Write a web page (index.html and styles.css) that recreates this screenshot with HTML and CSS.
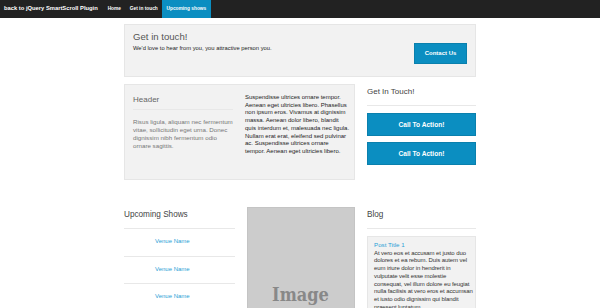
FILE: index.html
```html
<!DOCTYPE html>
<html lang="en">
<head>
    <meta charset="UTF-8">
    <title>jQuery SmartScroll Demo</title>
    <link rel="stylesheet" href="styles.css">
</head>
<body>

<div class="navbar">
    <a class="brand" href="#">back to jQuery SmartScroll Plugin</a>
    <ul class="nav">
        <li><a href="#">Home</a></li>
        <li><a href="#">Get in touch</a></li>
        <li class="active"><a href="#">Upcoming shows</a></li>
    </ul>
</div>

<div class="container">
    <div class="hero">
        <div>
            <h1>Get in touch!</h1>
            <p>We'd love to hear from you, you attractive person you.</p>
        </div>
        <a class="btn btn-hero" href="#">Contact Us</a>
    </div>

    <div class="row">
        <div class="well span8">
            <div class="well-col">
                <h2 class="title">Header</h2>
                <p class="muted">Risus ligula, aliquam nec fermentum vitae, sollicitudin eget urna. Donec dignissim nibh fermentum odio ornare sagittis.</p>
            </div>
            <div class="well-col well-text">
                <p>Suspendisse ultrices ornare tempor. Aenean eget ultricies libero. Phasellus non ipsum eros. Vivamus at dignissim massa. Aenean dolor libero, blandit quis interdum et, malesuada nec ligula. Nullam erat erat, eleifend sed pulvinar ac. Suspendisse ultrices ornare tempor. Aenean eget ultricies libero.</p>
            </div>
        </div>
        <div class="span4">
            <h2 class="title side-title">Get In Touch!</h2>
            <a class="btn btn-block" href="#">Call To Action!</a>
            <a class="btn btn-block" href="#">Call To Action!</a>
        </div>
    </div>

    <div class="row row-bottom">
        <div class="span4">
            <h2 class="title">Upcoming Shows</h2>
            <ul class="shows">
                <li><a href="#">Venue Name</a></li>
                <li><a href="#">Venue Name</a></li>
                <li><a href="#">Venue Name</a></li>
            </ul>
        </div>
        <div class="span4">
            <div class="placeholder">Image</div>
        </div>
        <div class="span4">
            <h2 class="title">Blog</h2>
            <div class="post">
                <a href="#">Post Title 1</a>
                <p>At vero eos et accusam et justo duo dolores et ea rebum. Duis autem vel eum iriure dolor in hendrerit in vulputate velit esse molestie consequat, vel illum dolore eu feugiat nulla facilisis at vero eros et accumsan et iusto odio dignissim qui blandit praesent luptatum</p>
            </div>
        </div>
    </div>
</div>

</body>
</html>
```

FILE: styles.css
```css
body {
    margin: 0;
    font-family: "Liberation Sans", Arial, sans-serif;
    font-size: 6px;
    line-height: 7.7px;
    color: #333;
    background-color: #fff;
    height: 308px;
    overflow: hidden;
}
a {
    text-decoration: none;
}
p {
    margin: 0;
}
.navbar {
    display: flex;
    align-items: center;
    height: 18px;
    background-color: #222;
    padding-left: 4px;
}
.brand {
    color: #fff;
    font-size: 5.8px;
    font-weight: bold;
    margin-right: 5.5px;
}
.nav {
    display: flex;
    list-style: none;
    margin: 0;
    padding: 0;
    height: 18px;
}
.nav li a {
    display: block;
    padding: 0 4.4px;
    line-height: 18px;
    color: #fff;
    font-size: 4.8px;
    font-weight: bold;
}
.nav li.active a {
    background-color: #0b8ec1;
}
.container {
    width: 352px;
    margin: 0 auto;
    padding-top: 6px;
}
.hero {
    display: flex;
    justify-content: space-between;
    align-items: flex-start;
    height: 53px;
    box-sizing: border-box;
    padding: 6px 8px 0 8px;
    background-color: #f2f2f2;
    border: 1px solid #e6e6e6;
}
.hero h1 {
    margin: 0 0 3px 0;
    font-size: 9.6px;
    line-height: 11px;
    font-weight: normal;
    color: #555;
}
.hero p {
    color: #222;
    font-size: 5.8px;
}
.btn {
    display: block;
    background-color: #0b8ec1;
    color: #fff;
    text-align: center;
    border: 1px solid #0a80ad;
    box-sizing: border-box;
}
.btn-hero {
    width: 53px;
    height: 21px;
    line-height: 19px;
    margin-top: 12px;
    font-size: 6px;
    font-weight: bold;
}
.row {
    display: flex;
    justify-content: space-between;
    margin-top: 7px;
}
.span8 {
    width: 231px;
}
.span4 {
    width: 111px;
}
.well {
    display: flex;
    justify-content: space-between;
    height: 96px;
    box-sizing: border-box;
    padding: 8px 4px 0 8px;
    background-color: #f2f2f2;
    border: 1px solid #e6e6e6;
}
.well-col {
    width: 100px;
}
.well-text {
    width: 105px;
    padding-top: 1px;
    color: #222;
}
.title {
    margin: 0;
    padding-bottom: 5px;
    font-size: 8px;
    line-height: 10px;
    font-weight: normal;
    color: #444;
    border-bottom: 1px solid #e8e8e8;
}
.well .title {
    padding-top: 2px;
    padding-bottom: 4px;
    margin-bottom: 8px;
    color: #666;
}
.muted {
    color: #777;
    font-size: 6.2px;
    line-height: 8px;
}
.side-title {
    padding-top: 3px;
    padding-bottom: 8px;
    margin-left: 2px;
    margin-bottom: 7px;
}
.btn-block {
    height: 23px;
    line-height: 21px;
    margin-left: 2px;
    margin-bottom: 6px;
    font-size: 6.6px;
    font-weight: bold;
}
.row-bottom {
    margin-top: 27px;
}
.row-bottom .title {
    padding-top: 3px;
    padding-bottom: 8px;
    font-size: 8.2px;
}
.row-bottom .span4:last-child .title {
    margin-left: 2px;
}
.shows {
    list-style: none;
    margin: 0;
    padding: 0;
}
.shows li {
    padding: 9px 0 10px 31px;
    border-bottom: 1px solid #e8e8e8;
}
.shows li a {
    color: #2a9fd6;
    font-size: 6px;
}
.placeholder {
    display: flex;
    justify-content: center;
    align-items: flex-end;
    width: 108px;
    height: 104px;
    margin-left: 2px;
    box-sizing: border-box;
    padding-bottom: 4px;
    background-color: #ccc;
    border: 1px solid #c4c4c4;
    color: #888;
    font-family: "DejaVu Serif", serif;
    font-stretch: condensed;
    font-weight: bold;
    font-size: 18px;
    line-height: 22px;
}
.post {
    margin-top: 7px;
    margin-left: 2px;
    padding: 4px 1px 0 6px;
    height: 69px;
    overflow: hidden;
    background-color: #f2f2f2;
    border: 1px solid #e6e6e6;
}
.post a {
    display: block;
    color: #2a9fd6;
    font-size: 6.2px;
    margin-bottom: 1px;
}
.post p {
    color: #333;
    font-size: 6px;
    line-height: 7.7px;
    letter-spacing: -0.1px;
}
```
